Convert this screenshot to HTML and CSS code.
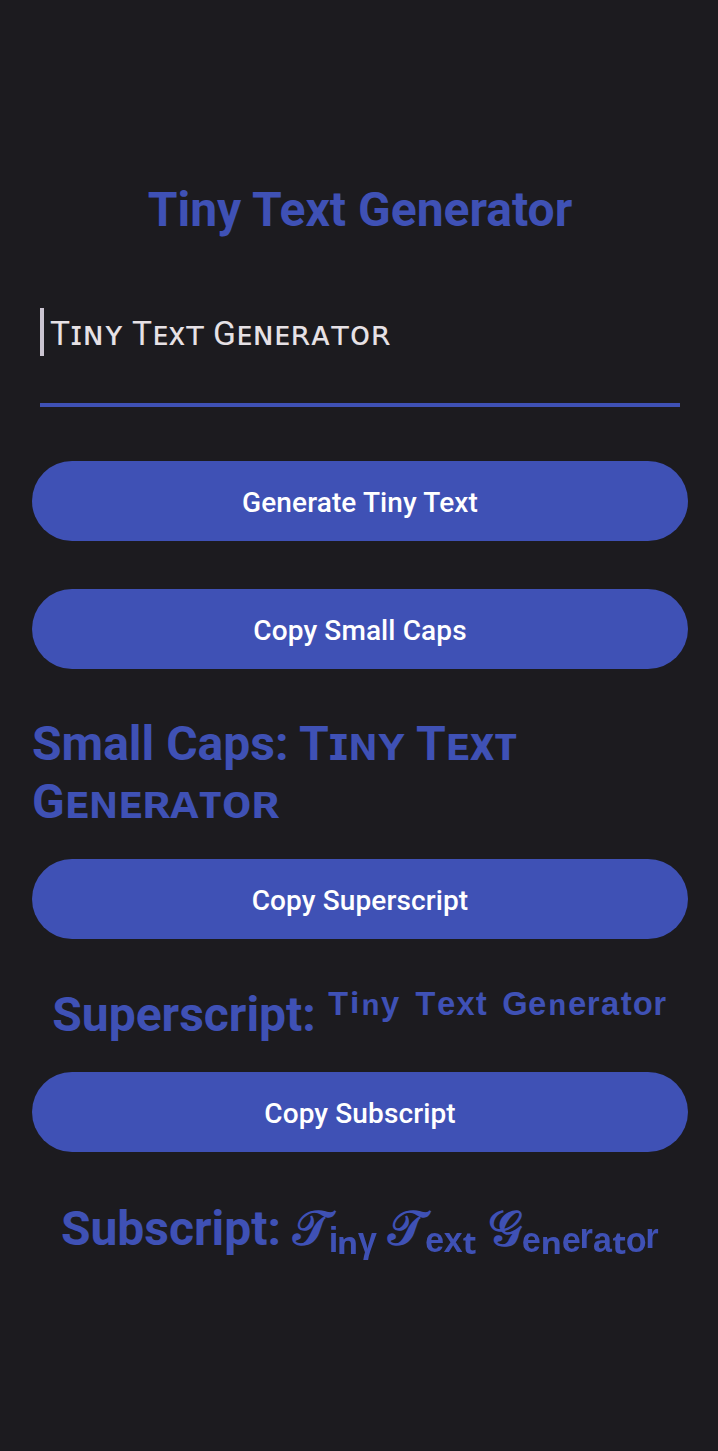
FILE: index.html
```html
<!DOCTYPE html>
<html lang="en">
<head>
    <meta charset="UTF-8">
    <meta name="viewport" content="width=device-width, initial-scale=1.0">
    <title>Tiny Text Generator</title>
    <link rel="stylesheet" href="styles.css">
</head>
<body>
    <div class="app-container">
        <h1>Tiny Text Generator</h1>

        <div class="text-field">
            <span class="caret"></span>
            <span class="field-value">Tɪɴʏ Tᴇxᴛ Gᴇɴᴇʀᴀᴛᴏʀ</span>
        </div>

        <button class="action-btn generate-btn">Generate Tiny Text</button>
        <button class="action-btn">Copy Small Caps</button>

        <div class="result result-small">Small Caps: Tɪɴʏ Tᴇxᴛ Gᴇɴᴇʀᴀᴛᴏʀ</div>

        <button class="action-btn">Copy Superscript</button>

        <div class="result result-super">Superscript: <span class="super-text">ᵀⁱⁿʸ ᵀᵉˣᵗ ᴳᵉⁿᵉʳᵃᵗᵒʳ</span></div>

        <button class="action-btn">Copy Subscript</button>

        <div class="result result-sub">Subscript: 𝒯<span class="sub-text">ᵢₙᵧ</span> 𝒯<span class="sub-text">ₑₓₜ</span> 𝒢<span class="sub-text">ₑₙₑ<span class="raised">ᵣ</span>ₐₜₒ<span class="raised">ᵣ</span></span></div>
    </div>
</body>
</html>
```

FILE: styles.css
```css
body {
    font-family: 'Roboto', 'Liberation Sans', 'Noto Sans', 'DejaVu Sans', sans-serif;
    background-color: #1c1b1f;
    margin: 0;
    min-height: 1451px;
}

.app-container {
    padding: 180px 30px 0 32px;
    display: flex;
    flex-direction: column;
}

h1 {
    color: #3f51b5;
    font-size: 48px;
    line-height: 60px;
    font-weight: 700;
    text-align: center;
    margin: 0 0 67px;
}

.text-field {
    display: flex;
    align-items: flex-start;
    margin: 0 8px 54px;
    height: 100px;
    box-sizing: border-box;
    border-bottom: 4px solid #3f51b5;
    color: #e6e1e5;
    font-family: 'Roboto', 'DejaVu Sans', sans-serif;
    font-size: 33.6px;
}

.caret {
    width: 4px;
    height: 48px;
    margin-top: 1px;
    background-color: #cac4d0;
    margin-right: 6px;
}

.field-value {
    line-height: 54px;
}

.action-btn {
    background-color: #3f51b5;
    color: white;
    border: none;
    height: 80px;
    font-family: inherit;
    font-size: 28px;
    font-weight: 500;
    letter-spacing: 0.12px;
    border-radius: 40px;
    width: 656px;
    margin-bottom: 48px;
    padding: 3px 0 0;
}

.result {
    color: #3f51b5;
    font-size: 48px;
    line-height: 58px;
    font-weight: 700;
}

.result-small {
    margin: -2px 0 28px;
}

.result-super, .result-sub {
    text-align: center;
    white-space: nowrap;
}

.result-super {
    margin: -5px 0 28px;
}

.result-sub {
    margin: 0;
}

.super-text {
    font-family: 'Liberation Sans', 'Noto Sans', sans-serif;
    letter-spacing: 1.5px;
    vertical-align: 4px;
}

.sub-text {
    font-size: 50px;
    line-height: 1;
    vertical-align: -4px;
}

.raised {
    vertical-align: 4px;
}
```
